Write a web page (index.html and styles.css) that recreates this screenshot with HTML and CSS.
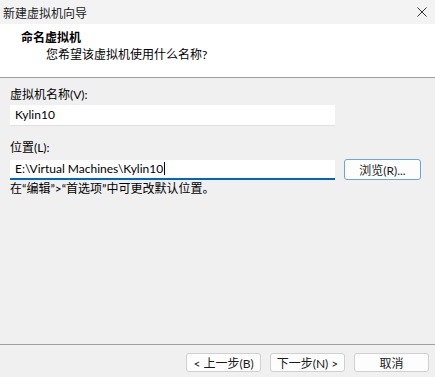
FILE: index.html
```html
<!DOCTYPE html>
<html lang="zh-CN">
<head>
  <meta charset="UTF-8" />
  <title>新建虚拟机向导</title>
  <link rel="stylesheet" href="styles.css">
</head>
<body>
  <div class="window">
    <div class="titlebar">
      <span class="title">新建虚拟机向导</span>
      <svg class="close" width="10" height="10" viewBox="0 0 10 10">
        <path d="M0.5 0.5 L9.5 9.5 M9.5 0.5 L0.5 9.5" stroke="#333" stroke-width="1" fill="none" />
      </svg>
    </div>

    <div class="header">
      <h1 class="header-title">命名虚拟机</h1>
      <p class="header-sub">您希望该虚拟机使用什么名称?</p>
    </div>

    <div class="content">
      <label class="field-label">虚拟机名称(V):</label>
      <div class="row">
        <div class="textbox">Kylin10</div>
      </div>

      <label class="field-label location">位置(L):</label>
      <div class="row">
        <div class="textbox focused">E:\Virtual Machines\Kylin10<span class="caret"></span></div>
        <button class="btn browse">浏览(R)...</button>
      </div>

      <p class="hint">在“编辑”&gt;“首选项”中可更改默认位置。</p>
    </div>

    <div class="footer">
      <button class="btn">&lt; 上一步(B)</button>
      <button class="btn">下一步(N) &gt;</button>
      <button class="btn">取消</button>
    </div>
  </div>
</body>
</html>
```

FILE: styles.css
```css
body {
  margin: 0;
  padding: 0;
  font-family: 'Lato', 'Noto Sans CJK SC', sans-serif;
  font-size: 12px;
  color: #000;
  background-color: #f0f0f0;
}

.window {
  width: 435px;
  height: 377px;
  display: flex;
  flex-direction: column;
  background-color: #f0f0f0;
}

.titlebar {
  height: 24px;
  display: flex;
  align-items: center;
  justify-content: space-between;
  padding: 0 8px 0 3px;
  background-color: #f3f3f3;
}

.title {
  font-size: 12px;
  color: #1a1a1a;
}

.header {
  height: 54px;
  background-color: #fff;
  border-bottom: 1px solid #a0a0a0;
  box-sizing: border-box;
}

.header-title {
  margin: 0;
  padding: 6px 0 0 21px;
  font-size: 12px;
  font-weight: bold;
  line-height: 16px;
}

.header-sub {
  margin: 1px 0 0 46px;
  font-size: 12px;
  line-height: 16px;
}

.content {
  flex: 1;
  padding: 9px 0 0 10px;
}

.field-label {
  display: block;
  line-height: 16px;
  margin-bottom: 2px;
}

.field-label.location {
  margin-top: 14px;
  margin-bottom: 3px;
}

.row {
  display: flex;
  align-items: center;
  gap: 9px;
}

.textbox {
  width: 325px;
  height: 21px;
  box-sizing: border-box;
  background-color: #fff;
  border-bottom: 1px solid #e0e0e0;
  padding-left: 5px;
  line-height: 20px;
  font-size: 12px;
}

.textbox.focused {
  height: 20px;
  border-bottom: 2px solid #0067c0;
  line-height: 18px;
}

.caret {
  display: inline-block;
  width: 1px;
  height: 13px;
  margin-left: 1px;
  background-color: #000;
  vertical-align: -2px;
}

.btn {
  height: 19px;
  width: 75px;
  padding: 0;
  background-color: #fdfdfd;
  border: 1px solid #d0d0d0;
  border-radius: 3px;
  font-family: 'Lato', 'Noto Sans CJK SC', sans-serif;
  font-size: 12px;
  color: #1a1a1a;
}

.btn.browse {
  height: 21px;
  width: 77px;
  border-color: #6aa5dc;
}

.hint {
  margin: 1px 0 0;
  line-height: 16px;
}

.footer {
  height: 33px;
  box-sizing: border-box;
  border-top: 1px solid #a0a0a0;
  display: flex;
  align-items: flex-start;
  justify-content: flex-end;
  gap: 9px;
  padding: 8px 6px 0 0;
}
```
